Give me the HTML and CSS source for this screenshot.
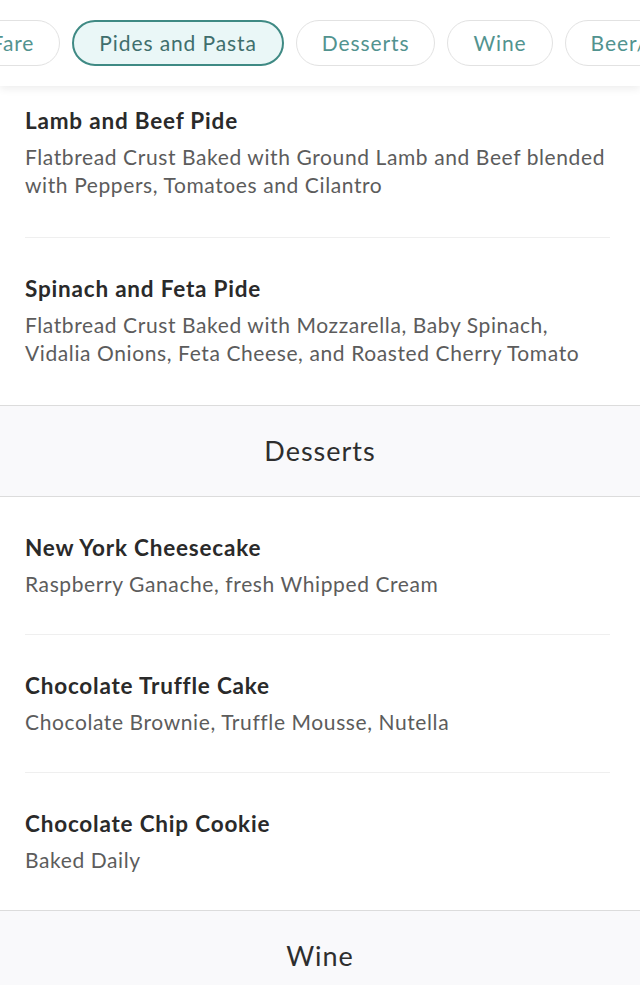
FILE: index.html
```html
<!DOCTYPE html>
<html lang="en">
<head>
<meta charset="UTF-8">
<meta name="viewport" content="width=device-width, initial-scale=1.0">
<title>Menu</title>
<link rel="stylesheet" href="styles.css">
</head>
<body>
<div id="tab-bar">
  <div id="tab-row">
    <span class="tab">Light Fare</span>
    <span class="tab active">Pides and Pasta</span>
    <span class="tab">Desserts</span>
    <span class="tab">Wine</span>
    <span class="tab">Beer/Cider</span>
  </div>
</div>

<div id="menu">
  <div class="section first">
    <div class="item">
      <div class="item-name">Lamb and Beef Pide</div>
      <div class="item-desc">Flatbread Crust Baked with Ground Lamb and Beef blended with Peppers, Tomatoes and Cilantro</div>
    </div>
    <div class="item">
      <div class="item-name">Spinach and Feta Pide</div>
      <div class="item-desc">Flatbread Crust Baked with Mozzarella, Baby Spinach, Vidalia Onions, Feta Cheese, and Roasted Cherry Tomato</div>
    </div>
  </div>

  <div class="section-title">Desserts</div>
  <div class="section">
    <div class="item">
      <div class="item-name">New York Cheesecake</div>
      <div class="item-desc">Raspberry Ganache, fresh Whipped Cream</div>
    </div>
    <div class="item">
      <div class="item-name">Chocolate Truffle Cake</div>
      <div class="item-desc">Chocolate Brownie, Truffle Mousse, Nutella</div>
    </div>
    <div class="item">
      <div class="item-name">Chocolate Chip Cookie</div>
      <div class="item-desc">Baked Daily</div>
    </div>
  </div>

  <div class="section-title">Wine</div>
</div>
</body>
</html>
```
FILE: styles.css
```css
body {
  margin: 0;
  font-family: Lato, "Open Sans", sans-serif;
  background-color: #fff;
  color: #2b2b2b;
  overflow: hidden;
}
#tab-bar {
  height: 86px;
  background-color: #fff;
  box-shadow: 0 3px 8px rgba(0, 0, 0, 0.07);
  overflow: hidden;
  position: relative;
  z-index: 1;
}
#tab-row {
  display: flex;
  gap: 12px;
  padding-top: 20px;
  margin-left: -91px;
  white-space: nowrap;
}
.tab {
  box-sizing: border-box;
  height: 46px;
  line-height: 44px;
  padding: 0 25px;
  border: 1px solid #e2e2e2;
  border-radius: 23px;
  font-size: 21px;
  letter-spacing: 0.9px;
  color: #52938f;
  background-color: #fff;
}
.tab.active {
  border: 2px solid #3f8a84;
  line-height: 42px;
  background-color: #eaf7f7;
  color: #3f6f6d;
}
.section {
  padding: 0 30px 0 25px;
}
.item {
  padding: 37px 0 36px;
}
.item + .item {
  border-top: 1px solid #efefef;
}
.section.first .item {
  padding-bottom: 38px;
}
.section.first .item:first-child {
  padding-top: 21px;
}
.item-name {
  font-size: 22.5px;
  font-weight: bold;
  letter-spacing: 0.8px;
  line-height: 28px;
  color: #2a2a2a;
}
.item-desc {
  margin-top: 8px;
  font-size: 21px;
  letter-spacing: 0.6px;
  line-height: 28px;
  color: #5c5c5c;
}
.section-title {
  height: 90px;
  line-height: 90px;
  text-align: center;
  font-size: 27px;
  letter-spacing: 1px;
  color: #2e2e2e;
  background-color: #f9f9fb;
  border-top: 1px solid #dcdcdc;
  border-bottom: 1px solid #dcdcdc;
}
```
